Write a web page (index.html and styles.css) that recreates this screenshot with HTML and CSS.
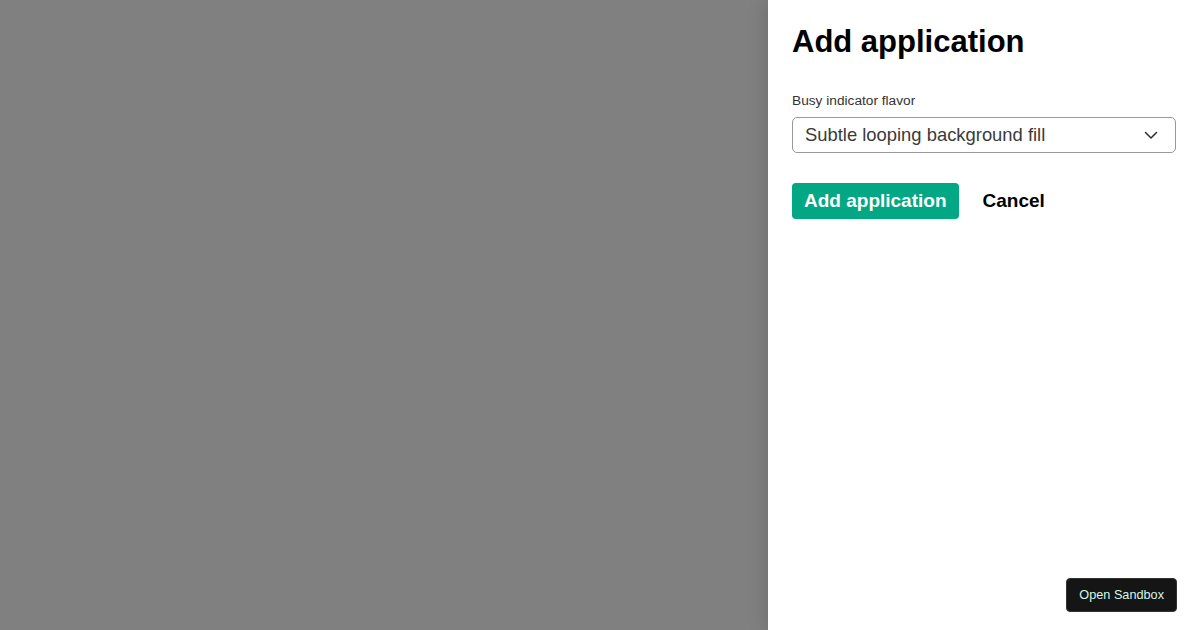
FILE: index.html
```html
<!DOCTYPE html>
<html>
<head>
<meta charset="utf-8">
<link rel="stylesheet" href="styles.css">
</head>
<body>
<div class="backdrop"></div>
<aside class="drawer">
  <h1 class="title">Add application</h1>
  <form class="form">
    <label class="field">
      <span class="label">Busy indicator flavor</span>
      <span class="select">
        <span class="select-value">Subtle looping background fill</span>
        <svg class="chevron" width="16" height="16" viewBox="0 0 16 16"><path d="M2.5 5.5 L8 11 L13.5 5.5" fill="none" stroke="#333" stroke-width="1.6" stroke-linecap="round" stroke-linejoin="round"/></svg>
      </span>
    </label>
    <div class="actions">
      <button type="button" class="btn-primary">Add application</button>
      <button type="button" class="btn-link">Cancel</button>
    </div>
  </form>
</aside>
<button type="button" class="sandbox">Open Sandbox</button>
</body>
</html>
```
FILE: styles.css
```css
html, body {
  margin: 0;
  padding: 0;
  width: 1200px;
  height: 630px;
  overflow: hidden;
  font-family: "Liberation Sans", Arial, sans-serif;
  background: #808080;
}
body {
  display: flex;
  justify-content: flex-end;
}
.backdrop {
  flex: 1;
  background: #808080;
}
.drawer {
  width: 432px;
  height: 630px;
  box-sizing: border-box;
  background: #fff;
  padding: 24px 24px;
  box-shadow: -4px 0 16px rgba(0, 0, 0, 0.12);
  display: flex;
  flex-direction: column;
}
.title {
  margin: 0;
  font-size: 31px;
  line-height: 36px;
  font-weight: 700;
  color: #000;
}
.form {
  margin-top: 32px;
  display: flex;
  flex-direction: column;
}
.field {
  display: flex;
  flex-direction: column;
}
.label {
  font-size: 13.7px;
  line-height: 18px;
  color: #333;
  margin-bottom: 7px;
}
.select {
  display: flex;
  align-items: center;
  justify-content: space-between;
  height: 36px;
  box-sizing: border-box;
  border: 1px solid #999;
  border-radius: 5px;
  padding: 0 16px 0 12px;
}
.select-value {
  font-size: 18.4px;
  color: #3a3a3a;
}
.chevron {
  display: block;
}
.actions {
  margin-top: 30px;
  display: flex;
  align-items: center;
  gap: 24px;
}
.btn-primary {
  height: 36px;
  padding: 0 12px;
  border: none;
  border-radius: 4px;
  background: #02a783;
  color: #fff;
  font-family: inherit;
  font-size: 19px;
  font-weight: 700;
}
.btn-link {
  border: none;
  background: none;
  padding: 0;
  color: #000;
  font-family: inherit;
  font-size: 19px;
  font-weight: 700;
}
.sandbox {
  position: absolute;
  right: 23px;
  bottom: 18px;
  height: 34px;
  padding: 0 12px;
  border: 1px solid #333;
  border-radius: 4px;
  background: #151515;
  color: #d6f5ea;
  font-family: inherit;
  font-size: 12.7px;
}
```
